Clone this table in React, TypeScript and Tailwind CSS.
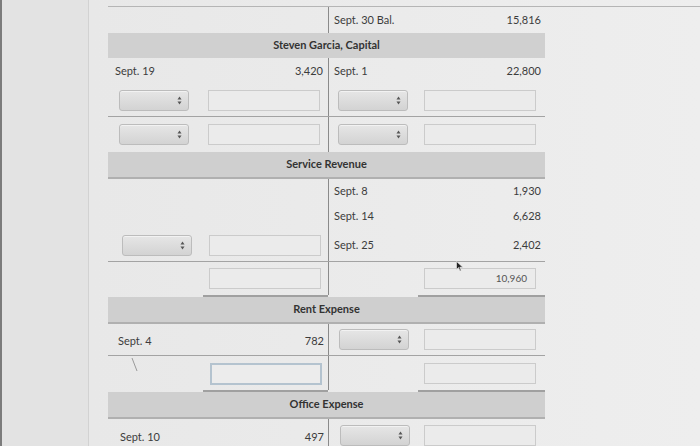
import React from 'react'

// T-account worksheet, photographed screen recreated flat
const font = { fontFamily: 'Lato, "Open Sans", sans-serif' }

function SelectBox() {
  return (
    <div className="w-[70px] h-[21px] rounded-[3px] border border-[#bcbcbc] bg-gradient-to-b from-[#e6e6e6] to-[#d3d3d3] flex items-center justify-end pr-[6px] shadow-[inset_0_1px_0_#f2f2f2]">
      <svg width="5" height="9" viewBox="0 0 5 9">
        <path d="M2.5 0.5 L4.5 3.5 L0.5 3.5 Z" fill="#555" />
        <path d="M2.5 8.5 L4.5 5.5 L0.5 5.5 Z" fill="#555" />
      </svg>
    </div>
  )
}

function InputBox({ value, focus }: { value?: string; focus?: boolean }) {
  return (
    <div
      className={
        focus
          ? 'w-[112px] h-[22px] border-2 border-[#b4c3cf] bg-[#ececec] flex items-center justify-end pr-[8px] text-[10px] text-[#555]'
          : 'w-[112px] h-[21px] border border-[#cbcbcb] bg-[#ebebeb] flex items-center justify-end pr-[8px] text-[10px] text-[#555]'
      }
    >
      {value}
    </div>
  )
}

function Header({ title, dark }: { title: string; dark?: boolean }) {
  return (
    <div
      className={
        dark
          ? 'h-[27px] shrink-0 bg-[#cfcfcf] border-b-2 border-[#b0b0b0] flex items-center justify-center text-[11px] font-bold text-[#333]'
          : 'h-[25px] shrink-0 bg-[#d0d0d0] flex items-center justify-center text-[11px] font-bold text-[#333]'
      }
    >
      {title}
    </div>
  )
}

function TextRow({
  h,
  left,
  right
}: {
  h: string
  left?: [string, string]
  right?: [string, string]
}) {
  return (
    <div className={`flex shrink-0 ${h}`}>
      <div className="w-[220px] flex items-center justify-between pl-[7px] pr-[5px]">
        <span>{left?.[0]}</span>
        <span>{left?.[1]}</span>
      </div>
      <div className="w-[217px] border-l border-[#8a8a8a] flex items-center justify-between pl-[5px] pr-[4px]">
        <span>{right?.[0]}</span>
        <span>{right?.[1]}</span>
      </div>
    </div>
  )
}

function TotalLines() {
  return (
    <div className="flex shrink-0 h-[2px]">
      <div className="w-[95px]" />
      <div className="w-[125px] bg-[#a0a0a0]" />
      <div className="w-[90px]" />
      <div className="w-[127px] bg-[#a0a0a0]" />
    </div>
  )
}

export default function App() {
  return (
    <div
      className="relative w-[700px] h-[446px] overflow-hidden flex bg-[#e9e9e9] text-[11px] text-[#3c3c3c]"
      style={font}
    >
      <div className="w-[89px] h-full shrink-0 bg-[#e3e3e3] border-l-2 border-[#7c7c7c] border-r border-r-[#d2d2d2]" />
      <div className="flex-1 flex flex-col bg-gradient-to-r from-[#e8e8e8] to-[#eeeeee]">
        <div className="h-[7px] shrink-0 ml-[19px] border-b border-[#b5b5b5]" />
        <div className="w-[437px] shrink-0 ml-[19px] flex flex-col">
          <TextRow h="h-[26px]" right={['Sept. 30 Bal.', '15,816']} />
          <Header title="Steven Garcia, Capital" />
          <TextRow h="h-[26px]" left={['Sept. 19', '3,420']} right={['Sept. 1', '22,800']} />

          <div className="flex shrink-0 h-[33px] border-b border-[#a3a3a3]">
            <div className="w-[220px] flex items-center justify-between pl-[11px] pr-[8px]">
              <SelectBox />
              <InputBox />
            </div>
            <div className="w-[217px] border-l border-[#8a8a8a] flex items-center justify-between pl-[9px] pr-[9px]">
              <SelectBox />
              <InputBox />
            </div>
          </div>
          <div className="flex shrink-0 h-[35px]">
            <div className="w-[220px] flex items-center justify-between pl-[11px] pr-[8px]">
              <SelectBox />
              <InputBox />
            </div>
            <div className="w-[217px] border-l border-[#8a8a8a] flex items-center justify-between pl-[9px] pr-[9px]">
              <SelectBox />
              <InputBox />
            </div>
          </div>

          <Header title="Service Revenue" dark />
          <TextRow h="h-[25px]" right={['Sept. 8', '1,930']} />
          <TextRow h="h-[25px]" right={['Sept. 14', '6,628']} />
          <div className="flex shrink-0 h-[33px] border-b border-[#a3a3a3]">
            <div className="w-[220px] flex items-center justify-between pl-[14px] pr-[7px]">
              <SelectBox />
              <InputBox />
            </div>
            <div className="w-[217px] border-l border-[#8a8a8a] flex items-center justify-between pl-[5px] pr-[4px]">
              <span>Sept. 25</span>
              <span>2,402</span>
            </div>
          </div>
          <div className="flex shrink-0 h-[33px]">
            <div className="w-[220px] flex items-center justify-end pr-[7px]">
              <InputBox />
            </div>
            <div className="w-[217px] border-l border-[#8a8a8a] flex items-center justify-end pr-[9px]">
              <InputBox value="10,960" />
            </div>
          </div>
          <TotalLines />

          <Header title="Rent Expense" dark />
          <div className="flex shrink-0 h-[32px] border-b border-[#a3a3a3]">
            <div className="w-[220px] flex items-center justify-between pl-[10px] pr-[4px] pt-[3px]">
              <span>Sept. 4</span>
              <span>782</span>
            </div>
            <div className="w-[217px] border-l border-[#8a8a8a] flex items-center justify-between pl-[10px] pr-[9px]">
              <SelectBox />
              <InputBox />
            </div>
          </div>
          <div className="flex shrink-0 h-[34px]">
            <div className="w-[220px] flex items-center justify-end pr-[6px] pt-[2px]">
              <InputBox focus />
            </div>
            <div className="w-[217px] border-l border-[#8a8a8a] flex items-center justify-end pr-[9px]">
              <InputBox />
            </div>
          </div>
          <TotalLines />

          <Header title="Office Expense" dark />
          <div className="flex shrink-0 h-[33px]">
            <div className="w-[220px] flex items-center justify-between pl-[12px] pr-[4px] pt-[4px]">
              <span>Sept. 10</span>
              <span>497</span>
            </div>
            <div className="w-[217px] border-l border-[#8a8a8a] flex items-center justify-between pl-[11px] pr-[9px]">
              <SelectBox />
              <InputBox />
            </div>
          </div>
        </div>
      </div>

      {/* mouse pointer */}
      <svg className="absolute left-[456px] top-[261px]" width="8" height="11" viewBox="0 0 8 11">
        <path d="M0.5 0.5 L0.5 8.5 L2.5 6.5 L4 10 L5.2 9.5 L3.8 6.2 L6.8 6.2 Z" fill="#222" stroke="#eee" strokeWidth="0.6" />
      </svg>
      {/* stray pen mark */}
      <svg className="absolute left-[131px] top-[357px]" width="8" height="16" viewBox="0 0 8 16">
        <path d="M1 1 L6 14" stroke="#9a9a9a" strokeWidth="1" fill="none" />
      </svg>
    </div>
  )
}
